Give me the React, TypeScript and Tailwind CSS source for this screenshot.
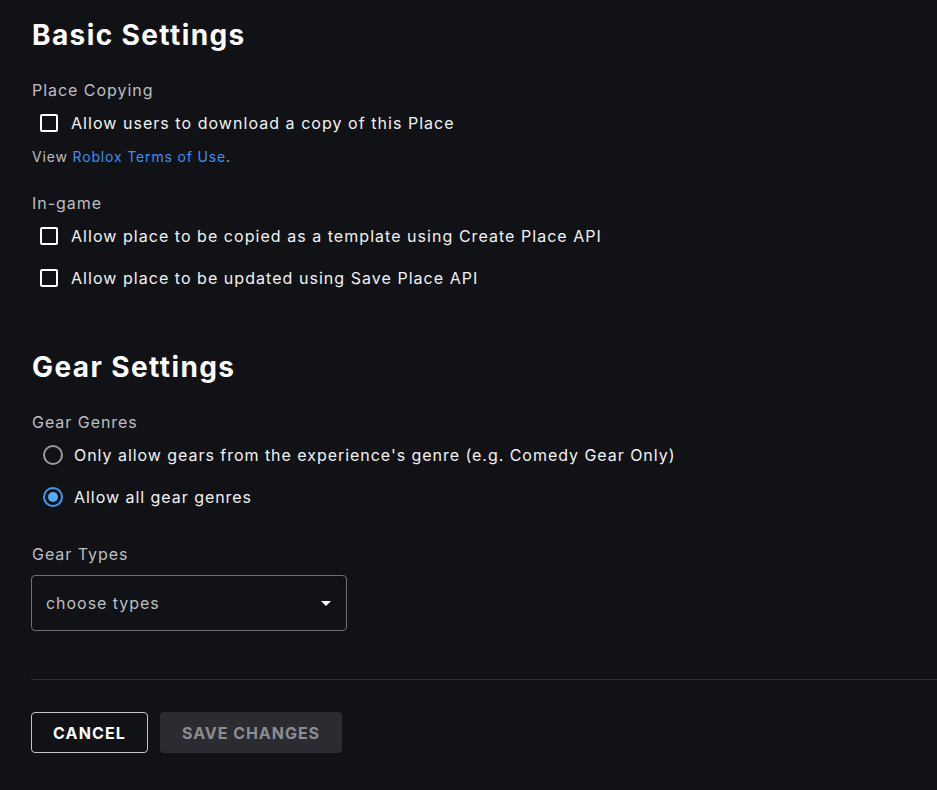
import React, { useState } from "react";

const font = { fontFamily: "Inter, 'Open Sans', sans-serif" };

function Checkbox(props: { label: string; className?: string }) {
  const [checked, setChecked] = useState(false);
  return (
    <label
      className={`flex h-6 cursor-pointer items-center pl-[9px] ${props.className ?? ""}`}
      onClick={() => setChecked(!checked)}
    >
      <span className="flex h-[18px] w-[18px] items-center justify-center rounded-[2px] border-2 border-white">
        {checked && <span className="h-2 w-2 bg-white" />}
      </span>
      <span className="ml-[13px] text-base tracking-[0.065em] text-[#f1f2f4]">{props.label}</span>
    </label>
  );
}

function Radio(props: {
  label: string;
  checked: boolean;
  onSelect: () => void;
  className?: string;
}) {
  return (
    <label
      className={`flex h-6 cursor-pointer items-center pl-[12px] ${props.className ?? ""}`}
      onClick={props.onSelect}
    >
      {props.checked ? (
        <span className="flex h-5 w-5 items-center justify-center rounded-full border-2 border-[#3d9df6]">
          <span className="h-[10px] w-[10px] rounded-full bg-[#52abff]" />
        </span>
      ) : (
        <span className="h-5 w-5 rounded-full border-2 border-[#9c9c9e]" />
      )}
      <span className="ml-[11px] text-base tracking-[0.06em] text-[#f1f2f4]">{props.label}</span>
    </label>
  );
}

export default function App() {
  const [genre, setGenre] = useState<"only" | "all">("all");

  return (
    <div
      className="min-h-[790px] w-full bg-[#111216] pb-10 pl-[31px] pt-[14px]"
      style={font}
    >
      <h1 className="pl-px text-[28px] font-bold leading-[42px] tracking-[0.05em] text-white">
        Basic Settings
      </h1>

      <div className="mt-[22px] pl-px text-base leading-6 tracking-[0.06em] text-[#bdbec2]">
        Place Copying
      </div>
      <Checkbox className="mt-[9px]" label="Allow users to download a copy of this Place" />
      <div className="mt-[12px] pl-px text-sm leading-5 tracking-[0.06em] text-[#bdbec2]">
        View{" "}
        <a href="#" className="text-[#3b90f2]">
          Roblox Terms of Use
        </a>
        .
      </div>

      <div className="mt-[24px] pl-px text-base leading-6 tracking-[0.06em] text-[#bdbec2]">
        In-game
      </div>
      <Checkbox
        className="mt-[9px]"
        label="Allow place to be copied as a template using Create Place API"
      />
      <Checkbox className="mt-[18px]" label="Allow place to be updated using Save Place API" />

      <h1 className="mt-[56px] pl-px text-[28px] font-bold leading-[42px] tracking-[0.05em] text-white">
        Gear Settings
      </h1>

      <div className="mt-[22px] pl-px text-base leading-6 tracking-[0.06em] text-[#bdbec2]">
        Gear Genres
      </div>
      <Radio
        className="mt-[9px]"
        label="Only allow gears from the experience's genre (e.g. Comedy Gear Only)"
        checked={genre === "only"}
        onSelect={() => setGenre("only")}
      />
      <Radio
        className="mt-[18px]"
        label="Allow all gear genres"
        checked={genre === "all"}
        onSelect={() => setGenre("all")}
      />

      <div className="mt-[33px] pl-px text-base leading-6 tracking-[0.06em] text-[#bdbec2]">
        Gear Types
      </div>
      <button className="mt-[9px] flex h-14 w-[316px] items-center justify-between rounded-[4px] border border-[#6e6f73] pl-[14px] pr-[15px] text-left">
        <span className="text-base tracking-[0.06em] text-[#bdbec2]">choose types</span>
        <svg width="10" height="5" viewBox="0 0 10 5">
          <path d="M0 0h10L5 5z" fill="#ffffff" />
        </svg>
      </button>

      <div className="mt-[48px] h-px w-full bg-[#2e3035]" />

      <div className="mt-[32px] flex gap-3">
        <button className="h-[41px] w-[117px] rounded-[4px] border border-[#c2c3c6] text-base font-bold tracking-[0.07em] text-white">
          CANCEL
        </button>
        <button className="h-[41px] w-[182px] rounded-[4px] bg-[#2a2c32] text-base font-bold tracking-[0.06em] text-[#8c8d92]">
          SAVE CHANGES
        </button>
      </div>
    </div>
  );
}
